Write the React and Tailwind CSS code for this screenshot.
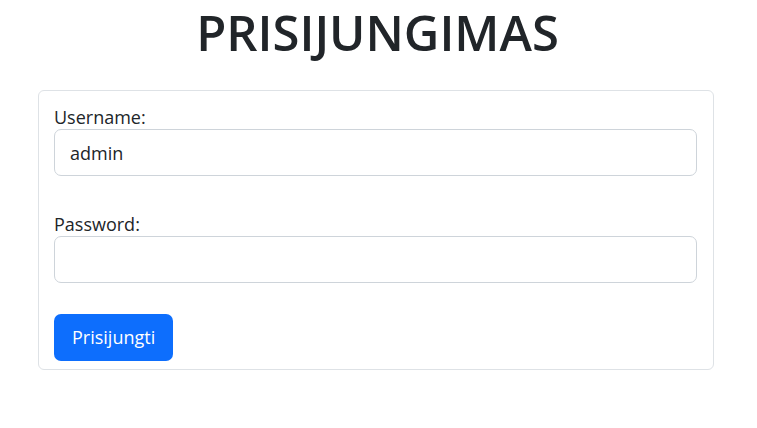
export default function App() {
  return (
    <div className="w-[757px] h-[428px] bg-white text-[#212529]" style={{ fontFamily: '"Open Sans", "Noto Sans", sans-serif' }}>
      <h1 className="text-center text-[49px] font-semibold leading-[64px] pr-[2px]">PRISIJUNGIMAS</h1>
      <div className="ml-[38px] mt-[26px] w-[676px] border border-[#dee2e6] rounded-[6px] pl-[15px] pr-[16px] pt-[14px] pb-[8px]">
        <label className="block text-[18px] leading-[24px]">Username:</label>
        <input
          type="text"
          defaultValue="admin"
          className="block w-full h-[47px] border border-[#ced4da] rounded-[7px] px-[15px] text-[18px] text-[#212529] outline-none"
          style={{ fontFamily: '"Open Sans", "Noto Sans", sans-serif' }}
        />
        <label className="block text-[18px] leading-[24px] mt-[36px]">Password:</label>
        <input
          type="password"
          className="block w-full h-[47px] border border-[#ced4da] rounded-[7px] px-[15px] text-[18px] outline-none"
        />
        <button
          className="mt-[31px] h-[47px] px-[18px] bg-[#0d6efd] text-white text-[18px] rounded-[7px]"
          style={{ fontFamily: '"Open Sans", "Noto Sans", sans-serif' }}
        >
          Prisijungti
        </button>
      </div>
    </div>
  );
}
